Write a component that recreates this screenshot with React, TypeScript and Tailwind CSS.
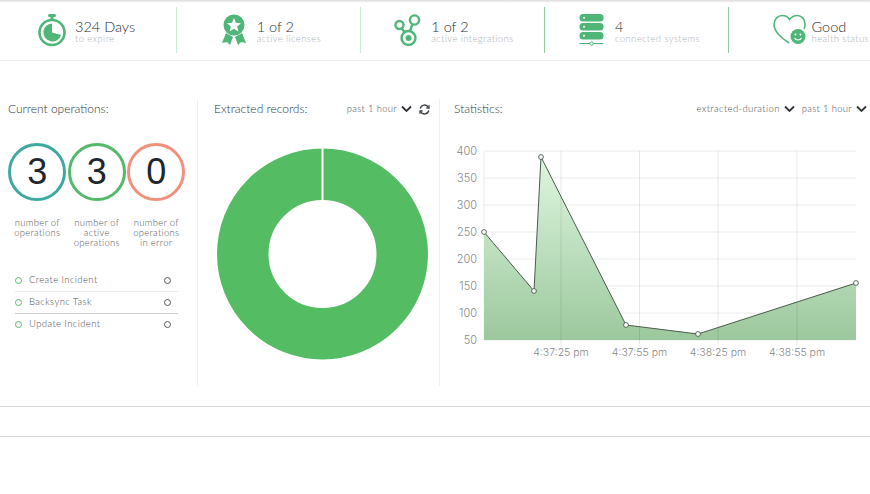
const font = { fontFamily: '"Lato", "Noto Sans", sans-serif' };

function TimerIcon() {
  return (
    <svg width="30" height="33" viewBox="0 0 30 33">
      <rect x="11" y="0" width="8" height="3" rx="1.5" fill="#4fb678" />
      <rect x="13.5" y="2" width="3" height="4" fill="#4fb678" />
      <circle cx="15" cy="18.5" r="12.5" fill="none" stroke="#4fb678" strokeWidth="2.6" />
      <path d="M15 9.5 A9 9 0 1 0 24 21 L15 18.5 Z" fill="#4fb678" />
    </svg>
  );
}

function AwardIcon() {
  return (
    <svg width="24" height="32" viewBox="0 0 24 32">
      <path d="M4 19 L0 29 L5 28 L8 31 L11 23 Z" fill="#4fb678" />
      <path d="M20 19 L24 29 L19 28 L16 31 L13 23 Z" fill="#4fb678" />
      <circle cx="12" cy="11" r="10.5" fill="#4fb678" />
      <path d="M12 4 L14 8.8 L19 9.2 L15.2 12.4 L16.4 17.4 L12 14.7 L7.6 17.4 L8.8 12.4 L5 9.2 L10 8.8 Z" fill="#fff" />
    </svg>
  );
}

function NodesIcon() {
  return (
    <svg width="27" height="33" viewBox="0 0 27 33">
      <g fill="none" stroke="#4fb678" strokeWidth="2.4">
        <circle cx="5.5" cy="11" r="4" />
        <circle cx="20.5" cy="6" r="4.6" />
        <circle cx="14.5" cy="24" r="7" />
        <path d="M7.5 14.5 L11 18.5 M18.5 10 L16 17" />
      </g>
      <circle cx="14.5" cy="24" r="3" fill="#4fb678" />
    </svg>
  );
}

function ServerIcon() {
  return (
    <svg width="25" height="32" viewBox="0 0 25 32">
      <rect x="0.5" y="0" width="24" height="7.5" rx="3.5" fill="#4fb678" />
      <rect x="0.5" y="9" width="24" height="7.5" rx="3.5" fill="#4fb678" />
      <rect x="0.5" y="18" width="24" height="7.5" rx="3.5" fill="#4fb678" />
      <circle cx="5" cy="3.7" r="1" fill="#fff" />
      <circle cx="5" cy="12.7" r="1" fill="#fff" />
      <circle cx="5" cy="21.7" r="1" fill="#fff" />
      <path d="M0.5 29.5 H24.5" stroke="#4fb678" strokeWidth="1" />
      <circle cx="12.5" cy="29.5" r="1.7" fill="#fff" stroke="#4fb678" />
    </svg>
  );
}

function HeartIcon() {
  return (
    <svg width="33" height="32" viewBox="0 0 33 32">
      <path d="M16 29 C9 24 1 18 1 10.5 C1 5 5 1.5 9.5 1.5 C12.5 1.5 15 3 16.5 5.5 C18.5 3 21 1.5 24 1.5 C28.5 1.5 32 5 32 10 C32 12 31.5 14 31 15" fill="none" stroke="#4fb678" strokeWidth="1.6" />
      <circle cx="25" cy="22.5" r="7.5" fill="#4fb678" />
      <circle cx="22.5" cy="20.5" r="1" fill="#fff" />
      <circle cx="27.5" cy="20.5" r="1" fill="#fff" />
      <path d="M21.5 24 A4 4 0 0 0 28.5 24" fill="none" stroke="#fff" strokeWidth="1.1" />
    </svg>
  );
}

function Chevron() {
  return (
    <svg width="11" height="8" viewBox="0 0 11 8">
      <path d="M1 1.5 L5.5 6 L10 1.5" fill="none" stroke="#2f3338" strokeWidth="1.8" />
    </svg>
  );
}

function Refresh() {
  return (
    <svg width="11" height="11" viewBox="0 0 11 11" fill="none" stroke="#3a3f44" strokeWidth="1.3">
      <path d="M1.2 4.5 A4.4 4.4 0 0 1 9.4 3.4" />
      <path d="M9.8 6.5 A4.4 4.4 0 0 1 1.6 7.6" />
      <path d="M10 1.2 V4 H7.4" />
      <path d="M1 9.8 V7 H3.6" />
    </svg>
  );
}

const stats = [
  { icon: <TimerIcon />, title: "324 Days", sub: "to expire", cell: "w-[177px] pl-[37px] gap-[8px]", line: "border-[#c9ead3]" },
  { icon: <AwardIcon />, title: "1 of 2", sub: "active licenses", cell: "w-[185px] pl-[45px] gap-[11px]", line: "border-[#c9ead3]" },
  { icon: <NodesIcon />, title: "1 of 2", sub: "active integrations", cell: "w-[184px] pl-[33px] gap-[10px]", line: "border-[#8fcca3]" },
  { icon: <ServerIcon />, title: "4", sub: "connected systems", cell: "w-[184px] pl-[34px] gap-[11px]", line: "border-[#8fcca3]" },
  { icon: <HeartIcon />, title: "Good", sub: "health status", cell: "flex-1 pl-[44px] gap-[6px]", line: "border-transparent" },
];

const counters = [
  { value: "3", ring: "border-[#3fa9a0]", label: ["number of", "operations"] },
  { value: "3", ring: "border-[#55b96a]", label: ["number of", "active", "operations"] },
  { value: "0", ring: "border-[#f2917b]", label: ["number of", "operations", "in error"] },
];

const tasks = [
  { name: "Create Incident", line: "border-[#ececec]" },
  { name: "Backsync Task", line: "border-[#cfcfcf]" },
  { name: "Update Incident", line: "border-transparent" },
];

function Donut() {
  return (
    <svg width="212" height="213" viewBox="0 0 212 213">
      <circle cx="105.5" cy="106" r="79.75" fill="none" stroke="#54bd63" strokeWidth="51.5" />
      <path d="M105.5 0 V53" stroke="#fff" strokeWidth="2" />
    </svg>
  );
}

// svg origin sits at page x=445, y=140
const points: [number, number][] = [
  [39, 92],
  [89, 151],
  [96, 17],
  [181, 185],
  [253, 194],
  [411, 143],
];

function LineChart() {
  const line = points.map((p) => p.join(",")).join(" ");
  const yLabels = ["400", "350", "300", "250", "200", "150", "100", "50"];
  const xTicks = [116, 194.5, 273, 352];
  const xLabels = ["4:37:25 pm", "4:37:55 pm", "4:38:25 pm", "4:38:55 pm"];
  return (
    <svg width="425" height="225" viewBox="0 0 425 225">
      <defs>
        <linearGradient id="area" x1="0" y1="0" x2="0" y2="1">
          <stop offset="0" stopColor="#def6df" />
          <stop offset="1" stopColor="#9cc89d" />
        </linearGradient>
      </defs>
      {yLabels.map((_, i) => (
        <path key={i} d={`M39 ${11 + i * 27} H411.5`} stroke="#ececec" />
      ))}
      <path d="M39 11 V200" stroke="#ececec" />
      <polygon points={`39,200 ${line} 411,200`} fill="url(#area)" />
      {xTicks.map((x) => (
        <path key={x} d={`M${x} 11 V206`} stroke="#000" strokeOpacity="0.09" />
      ))}
      {yLabels.map((l, i) => (
        <text key={l} x="32" y={15 + i * 27} textAnchor="end" fontSize="11" fill="#888" fontFamily="Inter, sans-serif" fontWeight="300">
          {l}
        </text>
      ))}
      {xLabels.map((l, i) => (
        <text key={l} x={xTicks[i]} y="216" textAnchor="middle" fontSize="10.5" fill="#888" fontFamily="Inter, sans-serif" fontWeight="300">
          {l}
        </text>
      ))}
      <polyline points={line} fill="none" stroke="#4a5a4c" strokeWidth="1" />
      {points.map(([x, y]) => (
        <circle key={x} cx={x} cy={y} r="2.4" fill="#fff" stroke="#4a5a4c" strokeWidth="0.9" />
      ))}
    </svg>
  );
}

export default function App() {
  return (
    <div style={font} className="h-[494px] w-[870px] overflow-hidden bg-white font-light text-[#33383d]">
      <div className="h-[3px] bg-gradient-to-b from-[#dcdcdc] to-white" />
      <div className="flex h-[58px] items-center border-b border-[#efefef] pb-[3px]">
        {stats.map((s) => (
          <div key={s.sub} className={`flex h-[46px] items-center border-r ${s.line} ${s.cell}`}>
            {s.icon}
            <div className="flex flex-col pt-[2px]">
              <span className="whitespace-nowrap text-[14.5px] leading-[15px] text-[#2b2f33]">{s.title}</span>
              <span className="whitespace-nowrap text-[9.5px] leading-[10px] tracking-[0.4px] text-[#aeb2b5]">{s.sub}</span>
            </div>
          </div>
        ))}
      </div>

      <div className="flex h-[325px] pt-[38px]">
        <div className="w-[198px] border-r border-[#f0f0f0] pl-2 pr-3">
          <div className="flex h-5 items-center text-[12px]">Current operations:</div>
          <div className="mt-[24px] flex w-[178px] gap-[1px]">
            {counters.map((c, i) => (
              <div key={i} className="flex w-[58.5px] flex-col items-center">
                <div className={`flex h-[58px] w-[58px] items-center justify-center rounded-full border-[3.5px] ${c.ring}`}>
                  <span style={{ fontFamily: '"Liberation Sans", sans-serif' }} className="text-[36px] font-normal text-[#22262e]">{c.value}</span>
                </div>
                <div className="mt-[17px] flex flex-col items-center text-[9.5px] leading-[10px] tracking-[0.3px] text-[#555a5e]">
                  {c.label.map((l) => (
                    <span key={l}>{l}</span>
                  ))}
                </div>
              </div>
            ))}
          </div>
          <div className="ml-[7px] mt-[22px] w-[163px]">
            {tasks.map((t) => (
              <div key={t.name} className={`flex h-[22px] items-center border-b pr-[7px] ${t.line}`}>
                <span className="h-[7px] w-[7px] rounded-full border border-[#55b96a]" />
                <span className="ml-[7px] flex-1 text-[9.5px] tracking-[0.4px] text-[#4b5054]">{t.name}</span>
                <span className="h-[7px] w-[7px] rounded-full border-[1.5px] border-[#555a5e]" />
              </div>
            ))}
          </div>
        </div>

        <div className="w-[242px] border-r border-[#f0f0f0]">
          <div className="flex h-5 items-center pl-[16px] pr-[9px]">
            <span className="flex-1 text-[12px]">Extracted records:</span>
            <span className="mr-[4px] text-[9.5px] tracking-[0.3px] text-[#4b5054]">past 1 hour</span>
            <Chevron />
            <span className="ml-[7px] flex"><Refresh /></span>
          </div>
          <div className="mt-[29px] pl-[19px]">
            <Donut />
          </div>
        </div>

        <div className="flex-1">
          <div className="flex h-5 items-center pl-[14px] pr-[3px]">
            <span className="flex-1 text-[12px]">Statistics:</span>
            <span className="mr-[4px] text-[9.5px] tracking-[0.4px] text-[#4b5054]">extracted-duration</span>
            <Chevron />
            <span className="ml-[7px] mr-[4px] text-[9.5px] tracking-[0.3px] text-[#4b5054]">past 1 hour</span>
            <Chevron />
          </div>
          <div className="mt-[21px] pl-[5px]">
            <LineChart />
          </div>
        </div>
      </div>

      <div className="mt-[20px] h-[31px] border-y border-[#d6d6d6]" />
    </div>
  );
}
